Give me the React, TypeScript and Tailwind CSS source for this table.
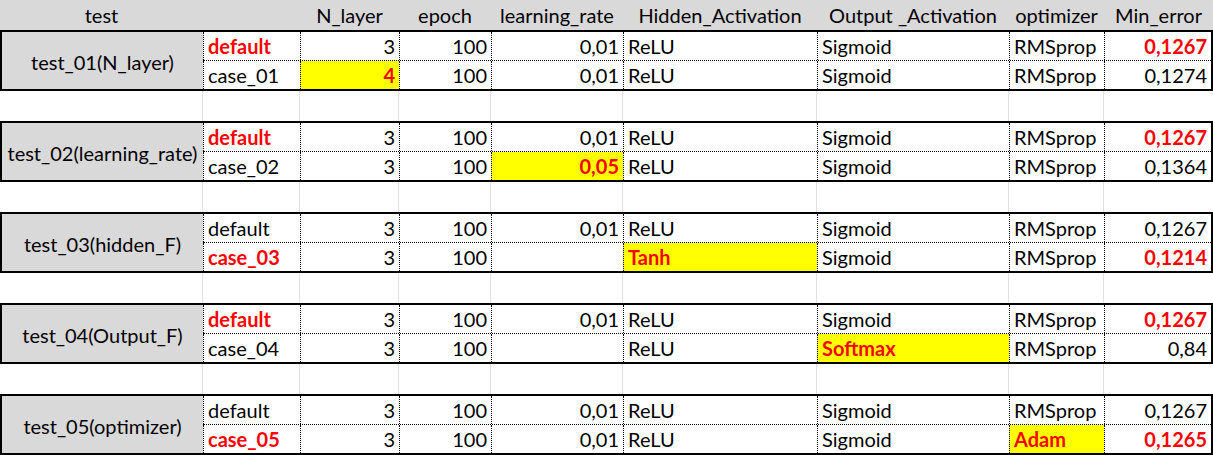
import React from "react";

type Cell = { v: string; red?: boolean; hl?: boolean; right?: boolean };

type Group = { name: string; rows: Cell[][] };

// column widths taken from the sheet (x boundaries 203, 300, 399, 491, 623, 817, 1009, 1104, 1213)
const headCols = [
  { label: "test", w: "w-[203px]" },
  { label: "", w: "w-[97px]" },
  { label: "N_layer", w: "w-[99px]" },
  { label: "epoch", w: "w-[92px]" },
  { label: "learning_rate", w: "w-[132px]" },
  { label: "Hidden_Activation", w: "w-[194px]" },
  { label: "Output _Activation", w: "w-[192px]" },
  { label: "optimizer", w: "w-[95px]" },
  { label: "Min_error", w: "w-[109px]" },
];

// data cells inside a group box (first and last trimmed by the 2px frame)
const dataCols = [
  "w-[97px]",
  "w-[99px]",
  "w-[92px]",
  "w-[132px]",
  "w-[194px]",
  "w-[192px]",
  "w-[95px]",
  "w-[107px]",
];

const blankCols = [
  "w-[203px]",
  "w-[97px]",
  "w-[99px]",
  "w-[92px]",
  "w-[132px]",
  "w-[194px]",
  "w-[192px]",
  "w-[95px]",
  "w-[109px]",
];

const r = (v: string, extra: Partial<Cell> = {}): Cell => ({ v, right: true, ...extra });
const l = (v: string, extra: Partial<Cell> = {}): Cell => ({ v, ...extra });

const groups: Group[] = [
  {
    name: "test_01(N_layer)",
    rows: [
      [l("default", { red: true }), r("3"), r("100"), r("0,01"), l("ReLU"), l("Sigmoid"), l("RMSprop"), r("0,1267", { red: true })],
      [l("case_01"), r("4", { red: true, hl: true }), r("100"), r("0,01"), l("ReLU"), l("Sigmoid"), l("RMSprop"), r("0,1274")],
    ],
  },
  {
    name: "test_02(learning_rate)",
    rows: [
      [l("default", { red: true }), r("3"), r("100"), r("0,01"), l("ReLU"), l("Sigmoid"), l("RMSprop"), r("0,1267", { red: true })],
      [l("case_02"), r("3"), r("100"), r("0,05", { red: true, hl: true }), l("ReLU"), l("Sigmoid"), l("RMSprop"), r("0,1364")],
    ],
  },
  {
    name: "test_03(hidden_F)",
    rows: [
      [l("default"), r("3"), r("100"), r("0,01"), l("ReLU"), l("Sigmoid"), l("RMSprop"), r("0,1267")],
      [l("case_03", { red: true }), r("3"), r("100"), r(""), l("Tanh", { red: true, hl: true }), l("Sigmoid"), l("RMSprop"), r("0,1214", { red: true })],
    ],
  },
  {
    name: "test_04(Output_F)",
    rows: [
      [l("default", { red: true }), r("3"), r("100"), r("0,01"), l("ReLU"), l("Sigmoid"), l("RMSprop"), r("0,1267", { red: true })],
      [l("case_04"), r("3"), r("100"), r(""), l("ReLU"), l("Softmax", { red: true, hl: true }), l("RMSprop"), r("0,84")],
    ],
  },
  {
    name: "test_05(optimizer)",
    rows: [
      [l("default"), r("3"), r("100"), r("0,01"), l("ReLU"), l("Sigmoid"), l("RMSprop"), r("0,1267")],
      [l("case_05", { red: true }), r("3"), r("100"), r("0,01"), l("ReLU"), l("Sigmoid"), l("Adam", { red: true, hl: true }), r("0,1265", { red: true })],
    ],
  },
];

function BlankRow() {
  return (
    <div className="flex h-[30.33px] bg-white">
      {blankCols.map((w, i) => (
        <div key={i} className={`${w} h-full ${i < 8 ? "border-r border-[#e1e1e1]" : ""}`} />
      ))}
    </div>
  );
}

function DataRow({ cells, first }: { cells: Cell[]; first: boolean }) {
  return (
    <div className={`flex flex-1 ${first ? "border-b border-dotted border-black" : ""}`}>
      {cells.map((c, i) => (
        <div
          key={i}
          className={`${dataCols[i]} flex items-end overflow-visible whitespace-nowrap border-l border-dotted border-black px-[4px] pb-[3px] leading-[22px] ${
            c.right ? "justify-end" : "justify-start"
          } ${c.hl ? "bg-[#ffff00]" : "bg-white"} ${c.red ? "font-bold text-[#ff0000]" : "text-black"}`}
        >
          {c.v}
        </div>
      ))}
    </div>
  );
}

function GroupBox({ g }: { g: Group }) {
  return (
    <div className="flex h-[60.67px] border-2 border-black">
      <div className="flex w-[201px] items-center justify-center whitespace-nowrap bg-[#d9d9d9] pt-[2px] text-black">
        {g.name}
      </div>
      <div className="flex flex-col">
        <DataRow cells={g.rows[0]} first />
        <DataRow cells={g.rows[1]} first={false} />
      </div>
    </div>
  );
}

export default function App() {
  return (
    <div className="h-[455px] w-[1213px] overflow-hidden bg-white font-['Lato',sans-serif] text-[20px]">
      <div className="flex h-[30.33px] bg-[#d9d9d9]">
        {headCols.map((c, i) => (
          <div
            key={i}
            className={`${c.w} flex items-end justify-center whitespace-nowrap pb-[4px] leading-[22px] text-black`}
          >
            {c.label}
          </div>
        ))}
      </div>
      {groups.map((g, i) => (
        <React.Fragment key={g.name}>
          {i > 0 && <BlankRow />}
          <GroupBox g={g} />
        </React.Fragment>
      ))}
    </div>
  );
}
